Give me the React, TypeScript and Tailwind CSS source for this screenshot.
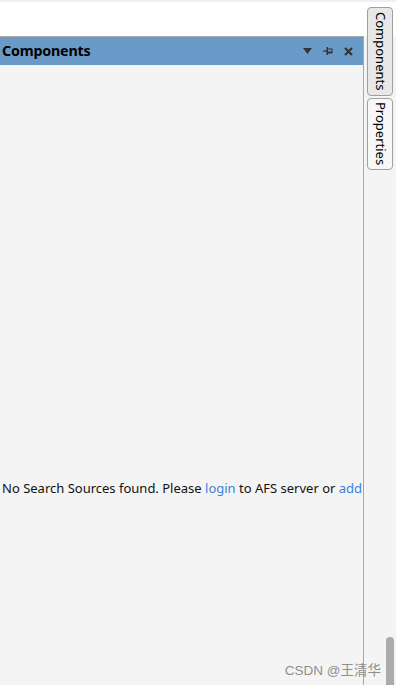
import React from "react";

export default function App() {
  return (
    <div
      className="relative w-[396px] h-[685px] overflow-hidden bg-[#f4f4f4] flex flex-col"
      style={{ fontFamily: '"Noto Sans", "Liberation Sans", sans-serif' }}
    >
      <div className="h-[2px] w-full bg-[#f0f0f0]" />
      <div className="flex flex-1 min-h-0">
        {/* Left dock */}
        <div className="w-[363px] flex flex-col">
          <div className="h-[34px] bg-white" />
          <div className="h-[29px] border-t border-[#a9a9a9] bg-[#6a9bc8] flex items-center pl-[2px] pr-[10px]">
            <span className="text-[14.3px] font-bold text-black leading-none tracking-[-0.2px]">Components</span>
            <div className="ml-auto flex items-center gap-[11px]">
              <svg width="9" height="6" viewBox="0 0 9 6">
                <path d="M0 0 H9 L4.5 6 Z" fill="#333" />
              </svg>
              <svg width="10" height="8" viewBox="0 0 10 8">
                <rect x="0" y="3.5" width="4" height="1.2" fill="#333" />
                <rect x="3.5" y="0" width="1.4" height="8" fill="#333" />
                <rect x="4" y="1.5" width="5.5" height="5" fill="#333" />
                <rect x="5" y="2.5" width="3.5" height="2" fill="#6a9bc8" />
              </svg>
              <svg width="9" height="9" viewBox="0 0 9 9">
                <path d="M1 1 L8 8 M8 1 L1 8" stroke="#333" strokeWidth="2.2" />
              </svg>
            </div>
          </div>
          <div className="flex-1 bg-[#f4f4f4] pt-[414px] overflow-hidden">
            <p className="whitespace-nowrap text-[13px] leading-[18px] text-[#111] pl-[2px]">
              No Search Sources found. Please <span className="text-[#3c82d9]">login</span> to AFS server or{" "}
              <span className="text-[#3c82d9]">add</span>
            </p>
          </div>
        </div>
        {/* Right side bar */}
        <div className="relative w-[33px] bg-[linear-gradient(to_bottom,#ffffff_34px,#f4f4f4_34px)] flex flex-col items-center pt-[5px] pl-[1px] gap-[2px]">
          <div className="absolute left-0 top-[34px] bottom-0 w-px bg-[#aaaaaa]" />
          <div className="w-[26px] h-[89px] rounded-[4px] border border-[#a0a0a0] bg-[#e8e8e8] flex items-center justify-center">
            <span className="[writing-mode:vertical-rl] text-[13px] leading-none text-black">Components</span>
          </div>
          <div className="w-[26px] h-[72px] rounded-[4px] border border-[#a0a0a0] bg-[#f7f7f7] flex items-center justify-center">
            <span className="[writing-mode:vertical-rl] text-[13px] leading-none text-black">Properties</span>
          </div>
        </div>
      </div>
      <div className="absolute right-[15px] bottom-[8px] text-[13.5px] leading-none text-[#8f8f8f]" style={{ fontFamily: '"Liberation Sans", "Noto Sans CJK SC", sans-serif' }}>
        CSDN @王清华
      </div>
      <div className="absolute right-[2px] bottom-0 w-[8px] h-[48px] rounded-t-full bg-[#ababab]" />
    </div>
  );
}
